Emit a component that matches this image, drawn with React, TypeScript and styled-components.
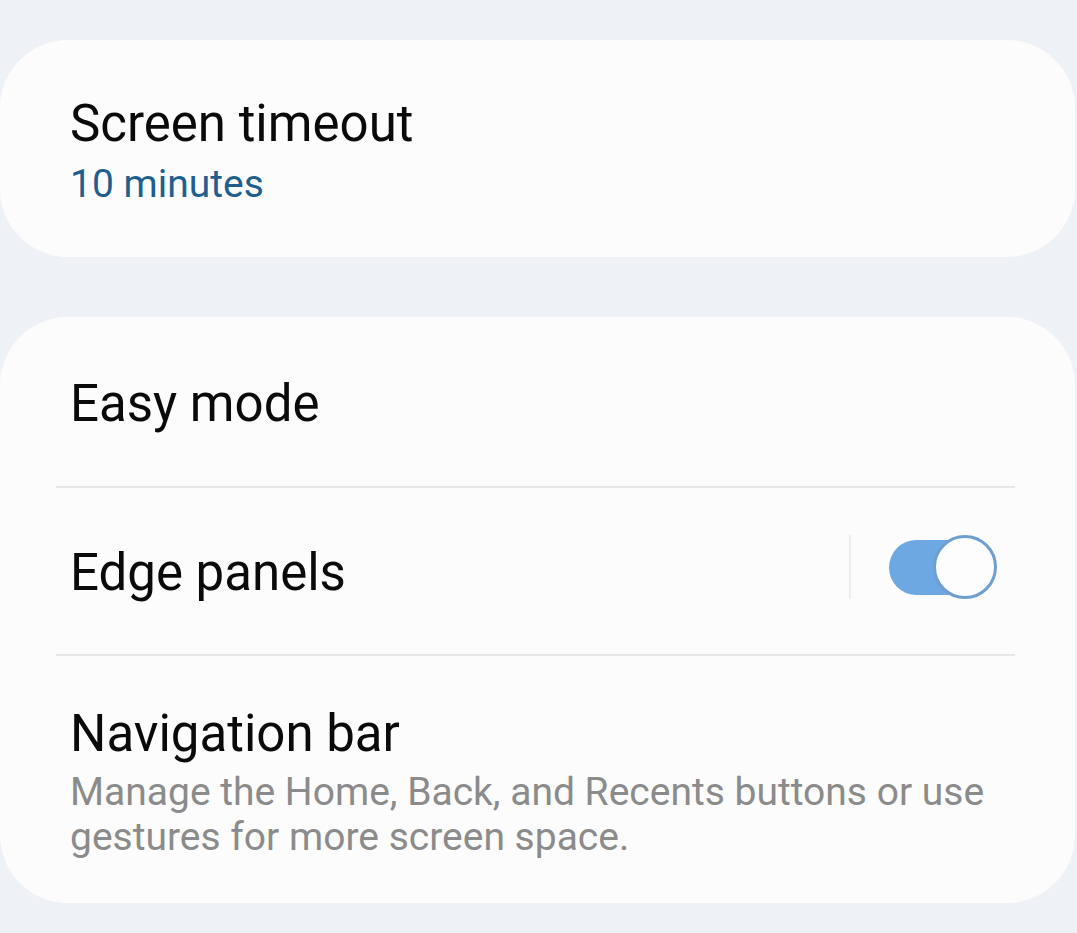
import React from "react";
import styled, { createGlobalStyle } from "styled-components";

const Global = createGlobalStyle`
  html, body { margin: 0; padding: 0; background: #eef1f5; }
  body { font-family: Roboto, "Noto Sans", sans-serif; -webkit-font-smoothing: antialiased; }
`;

const Page = styled.div`
  width: 1077px;
  height: 933px;
  box-sizing: border-box;
  padding: 40px 2px 0 0;
  display: flex;
  flex-direction: column;
  gap: 60px;
  background: #eef1f5;
  overflow: hidden;
`;

const Card = styled.div`
  background: #fcfcfc;
  border-radius: 68px;
  display: flex;
  flex-direction: column;
`;

const Row = styled.div<{ $h: number; $pt: number }>`
  height: ${(p) => p.$h}px;
  box-sizing: border-box;
  padding: ${(p) => p.$pt}px 80px 0 70px;
  display: flex;
  align-items: flex-start;
  justify-content: space-between;
`;

const TextCol = styled.div`
  display: flex;
  flex-direction: column;
`;

const Title = styled.div`
  font-size: 51px;
  line-height: 56px;
  color: #0a0a0a;
  letter-spacing: 0;
`;

const Value = styled.div`
  font-size: 39px;
  line-height: 50px;
  color: #1e5f8e;
  margin-top: 7px;
`;

const Desc = styled.div`
  font-size: 39px;
  line-height: 45px;
  color: #8b8b8b;
  width: 960px;
  margin-top: 8px;
`;

const Divider = styled.div`
  height: 2px;
  background: #e6e6e6;
  margin: 0 60px 0 56px;
`;

const ToggleArea = styled.div`
  display: flex;
  align-items: center;
  gap: 38px;
  margin-top: -10px;
`;

const VSep = styled.div`
  width: 2px;
  height: 64px;
  background: #ededed;
`;

const Track = styled.div`
  position: relative;
  width: 106px;
  height: 55px;
  border-radius: 28px;
  background: #6ea8e2;
`;

const Thumb = styled.div`
  position: absolute;
  right: -2px;
  top: 50%;
  transform: translateY(-50%);
  width: 58px;
  height: 58px;
  border-radius: 50%;
  background: #fdfdfd;
  border: 3px solid #6f9fd0;
`;

export default function App() {
  return (
    <>
      <Global />
      <Page>
        <Card>
          <Row $h={217} $pt={56}>
            <TextCol>
              <Title>Screen timeout</Title>
              <Value>10 minutes</Value>
            </TextCol>
          </Row>
        </Card>
        <Card>
          <Row $h={169} $pt={59}>
            <Title>Easy mode</Title>
          </Row>
          <Divider />
          <Row $h={166} $pt={57}>
            <Title>Edge panels</Title>
            <ToggleArea>
              <VSep />
              <Track>
                <Thumb />
              </Track>
            </ToggleArea>
          </Row>
          <Divider />
          <Row $h={247} $pt={50}>
            <TextCol>
              <Title>Navigation bar</Title>
              <Desc>
                Manage the Home, Back, and Recents buttons or use gestures for
                more screen space.
              </Desc>
            </TextCol>
          </Row>
        </Card>
      </Page>
    </>
  );
}
